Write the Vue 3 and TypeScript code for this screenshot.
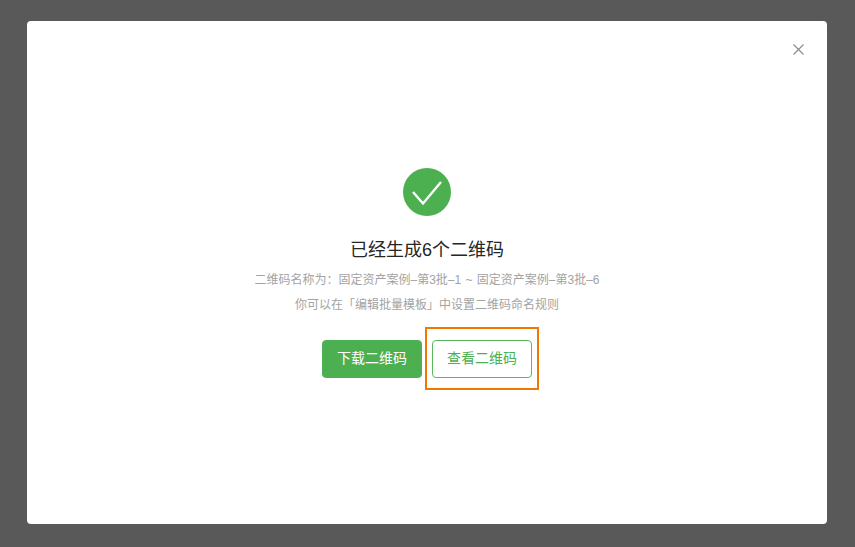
<script setup lang="ts">
const title = '已经生成6个二维码'
const lines: string[] = [
  '二维码名称为：固定资产案例–第3批–1 ~ 固定资产案例–第3批–6',
  '你可以在「编辑批量模板」中设置二维码命名规则',
]
</script>

<template>
  <div class="page">
    <section class="modal">
      <button class="close" aria-label="关闭">
        <svg width="13" height="13" viewBox="0 0 13 13">
          <path d="M1.5 1.5 L11.5 11.5 M11.5 1.5 L1.5 11.5" stroke="#8c8c8c" stroke-width="1.2" fill="none" />
        </svg>
      </button>
      <div class="content">
        <svg class="ok" width="48" height="48" viewBox="0 0 48 48">
          <circle cx="24" cy="24" r="24" fill="#4caf50" />
          <path d="M10 24 L20 35.5 L38 14" stroke="#fff" stroke-width="2.4" fill="none" />
        </svg>
        <h2 class="title">{{ title }}</h2>
        <p v-for="line in lines" :key="line" class="line">{{ line }}</p>
        <div class="actions">
          <button class="btn primary">下载二维码</button>
          <span class="highlight">
            <button class="btn ghost">查看二维码</button>
          </span>
        </div>
      </div>
    </section>
  </div>
</template>

<style>
html, body { margin: 0; background: #595959; }
</style>

<style scoped>
.page {
  width: 855px;
  height: 547px;
  box-sizing: border-box;
  padding: 21px 28px 23px 27px;
  background: #595959;
  font-family: "Liberation Sans", "Noto Sans CJK SC", sans-serif;
}
.modal {
  position: relative;
  height: 503px;
  background: #fff;
  border-radius: 4px;
  display: flex;
  flex-direction: column;
  align-items: center;
}
.close {
  position: absolute;
  top: 22px;
  right: 22px;
  width: 13px;
  height: 13px;
  padding: 0;
  border: 0;
  background: none;
  display: flex;
}
.content {
  margin-top: 147px;
  display: flex;
  flex-direction: column;
  align-items: center;
}
.ok { display: block; }
.title {
  margin: 22px 0 0;
  font-size: 18px;
  line-height: 24px;
  font-weight: 400;
  color: #262626;
}
.line {
  margin: 5px 0 0;
  font-size: 12px;
  line-height: 20px;
  color: #a3a3a3;
  word-spacing: 1px;
}
.title + .line { margin-top: 8px; }
.actions {
  position: relative;
  margin-top: 25px;
  display: flex;
  gap: 10px;
}
.btn {
  width: 100px;
  height: 38px;
  box-sizing: border-box;
  border-radius: 4px;
  font: inherit;
  font-size: 14px;
  padding: 0 0 4px;
}
.primary {
  background: #4caf50;
  border: 1px solid #4caf50;
  color: #fff;
}
.ghost {
  display: block;
  background: #fff;
  border: 1px solid #5cb860;
  color: #4caf50;
}
.highlight {
  display: block;
  position: relative;
}
.highlight::after {
  content: "";
  position: absolute;
  left: -7px;
  top: -13px;
  width: 114px;
  height: 63px;
  box-sizing: border-box;
  border: 2px solid #f07800;
  pointer-events: none;
}
</style>
